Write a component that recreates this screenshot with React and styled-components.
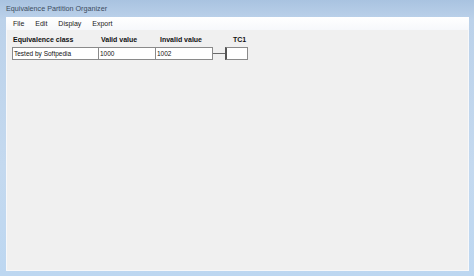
import React from 'react';
import styled, { createGlobalStyle } from 'styled-components';

const Global = createGlobalStyle`
  html, body { margin: 0; padding: 0; }
  body { width: 474px; height: 276px; overflow: hidden; background: #c4d9ef; }
`;

const columns = [
  { title: 'Equivalence class', value: 'Tested by Softpedia', width: 87 },
  { title: 'Valid value', value: '1000', width: 58 },
  { title: 'Invalid value', value: '1002', width: 58 },
];

export default function App() {
  return (
    <>
      <Global />
      <Window>
        <TitleBar>Equivalence Partition Organizer</TitleBar>
        <MenuBar>
          <MenuItem>File</MenuItem>
          <MenuItem>Edit</MenuItem>
          <MenuItem>Display</MenuItem>
          <MenuItem>Export</MenuItem>
        </MenuBar>
        <Client>
          <Table>
            <HeaderRow>
              {columns.map((c) => (
                <Header key={c.title} $width={c.width}>{c.title}</Header>
              ))}
              <Spacer />
              <Header $width={23} $center>TC1</Header>
            </HeaderRow>
            <InputRow>
              {columns.map((c) => (
                <Cell key={c.title} $width={c.width}>{c.value}</Cell>
              ))}
              <Connector />
              <TestCase />
            </InputRow>
          </Table>
        </Client>
      </Window>
    </>
  );
}

const Window = styled.div`
  width: 474px;
  height: 276px;
  box-sizing: border-box;
  display: flex;
  flex-direction: column;
  padding: 0 5px 5px 6px;
  background: linear-gradient(to bottom, #a9c3e0 0px, #bcd2ea 20px, #c4d9ef 60%, #bdd7f1 100%);
  font-family: "Liberation Sans", Tahoma, sans-serif;
  transform: translateZ(0);
  -webkit-font-smoothing: antialiased;
`;

const TitleBar = styled.div`
  height: 17px;
  line-height: 18px;
  font-size: 7.2px;
  color: #3c4c60;
  white-space: nowrap;
`;

const MenuBar = styled.div`
  height: 13px;
  display: flex;
  align-items: center;
  gap: 11px;
  padding-left: 7px;
  background: linear-gradient(to bottom, #ffffff, #f6f8fb);
`;

const MenuItem = styled.span`
  font-size: 7px;
  color: #1a1a1a;
`;

const Client = styled.div`
  flex: 1;
  background: #f0f0f0;
  border: 1px solid #f7f8fa;
  border-top: none;
  padding: 4px 0 0 5px;
`;

const Table = styled.div`
  display: flex;
  flex-direction: column;
  gap: 3px;
`;

const HeaderRow = styled.div`
  display: flex;
  align-items: center;
  height: 10px;
`;

const Header = styled.div`
  width: ${(p) => p.$width}px;
  font-size: 7px;
  font-weight: bold;
  color: #111;
  padding-left: ${(p) => (p.$center ? 0 : 1)}px;
  text-align: ${(p) => (p.$center ? 'center' : 'left')};
  white-space: nowrap;
`;

const Spacer = styled.div`
  width: 10px;
`;

const InputRow = styled.div`
  display: flex;
  align-items: center;
`;

const Cell = styled.div`
  width: ${(p) => p.$width}px;
  height: 13px;
  box-sizing: border-box;
  border: 1px solid #8a8a8a;
  margin-right: -1px;
  background: #fff;
  font-size: 6.5px;
  line-height: 11px;
  padding-left: 1px;
  color: #111;
  white-space: nowrap;
  overflow: hidden;
`;

const Connector = styled.div`
  width: 12px;
  height: 1px;
  margin-left: 1px;
  background: #6a6a6a;
`;

const TestCase = styled.div`
  width: 23px;
  height: 13px;
  box-sizing: border-box;
  border: 1px solid #8a8a8a;
  border-left: 2px solid #555;
  background: #fff;
`;
